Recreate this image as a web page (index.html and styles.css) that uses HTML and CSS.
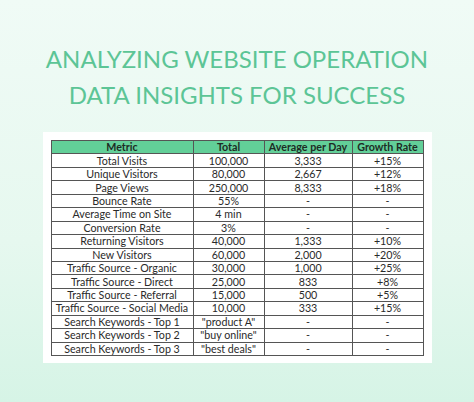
FILE: index.html
```html
<!DOCTYPE html>
<html>
<head>
<meta charset="utf-8">
<link rel="stylesheet" href="styles.css">
</head>
<body>
<div class="page">
  <h1 class="title">ANALYZING WEBSITE OPERATION<br>DATA INSIGHTS FOR SUCCESS</h1>
  <div class="panel">
    <table class="sheet">
      <colgroup>
        <col class="c1"><col class="c2"><col class="c3"><col class="c4">
      </colgroup>
      <thead>
        <tr><th>Metric</th><th>Total</th><th>Average per Day</th><th>Growth Rate</th></tr>
      </thead>
      <tbody>
        <tr><td>Total Visits</td><td>100,000</td><td>3,333</td><td>+15%</td></tr>
        <tr><td>Unique Visitors</td><td>80,000</td><td>2,667</td><td>+12%</td></tr>
        <tr><td>Page Views</td><td>250,000</td><td>8,333</td><td>+18%</td></tr>
        <tr><td>Bounce Rate</td><td>55%</td><td>-</td><td>-</td></tr>
        <tr><td>Average Time on Site</td><td>4 min</td><td>-</td><td>-</td></tr>
        <tr><td>Conversion Rate</td><td>3%</td><td>-</td><td>-</td></tr>
        <tr><td>Returning Visitors</td><td>40,000</td><td>1,333</td><td>+10%</td></tr>
        <tr><td>New Visitors</td><td>60,000</td><td>2,000</td><td>+20%</td></tr>
        <tr><td>Traffic Source - Organic</td><td>30,000</td><td>1,000</td><td>+25%</td></tr>
        <tr><td>Traffic Source - Direct</td><td>25,000</td><td>833</td><td>+8%</td></tr>
        <tr><td>Traffic Source - Referral</td><td>15,000</td><td>500</td><td>+5%</td></tr>
        <tr><td>Traffic Source - Social Media</td><td>10,000</td><td>333</td><td>+15%</td></tr>
        <tr><td>Search Keywords - Top 1</td><td>"product A"</td><td>-</td><td>-</td></tr>
        <tr><td>Search Keywords - Top 2</td><td>"buy online"</td><td>-</td><td>-</td></tr>
        <tr><td>Search Keywords - Top 3</td><td>"best deals"</td><td>-</td><td>-</td></tr>
      </tbody>
    </table>
  </div>
</div>
</body>
</html>
```

FILE: styles.css
```css
html, body {
  margin: 0;
  padding: 0;
}
body {
  width: 474px;
  height: 402px;
  overflow: hidden;
  background: linear-gradient(to bottom, #f0fbf6 0%, #e6f8ef 60%, #d6f4e6 100%);
  font-family: Lato, "Noto Sans", sans-serif;
}
.page {
  display: flex;
  flex-direction: column;
  align-items: center;
  padding-top: 41px;
}
.title {
  margin: 0;
  font-family: Lato, "Noto Sans", sans-serif;
  font-weight: 400;
  font-size: 24px;
  line-height: 36px;
  color: #5cc596;
  text-align: center;
  letter-spacing: 0;
}
.panel {
  margin-top: 19px;
  background: #ffffff;
  padding: 8px 8px 7px 8px;
}
.sheet {
  border-collapse: collapse;
  font-size: 10.7px;
  color: #2a2a2a;
}
.c1 { width: 142px; }
.c2 { width: 71px; }
.c3 { width: 88px; }
.c4 { width: 71px; }
.sheet th, .sheet td {
  border: 1px solid #555;
  height: 12.44px;
  padding: 0;
  text-align: center;
  line-height: 12px;
  white-space: nowrap;
}
.sheet th {
  background: #62cf98;
  font-weight: 700;
  color: #1d2b24;
}
```
